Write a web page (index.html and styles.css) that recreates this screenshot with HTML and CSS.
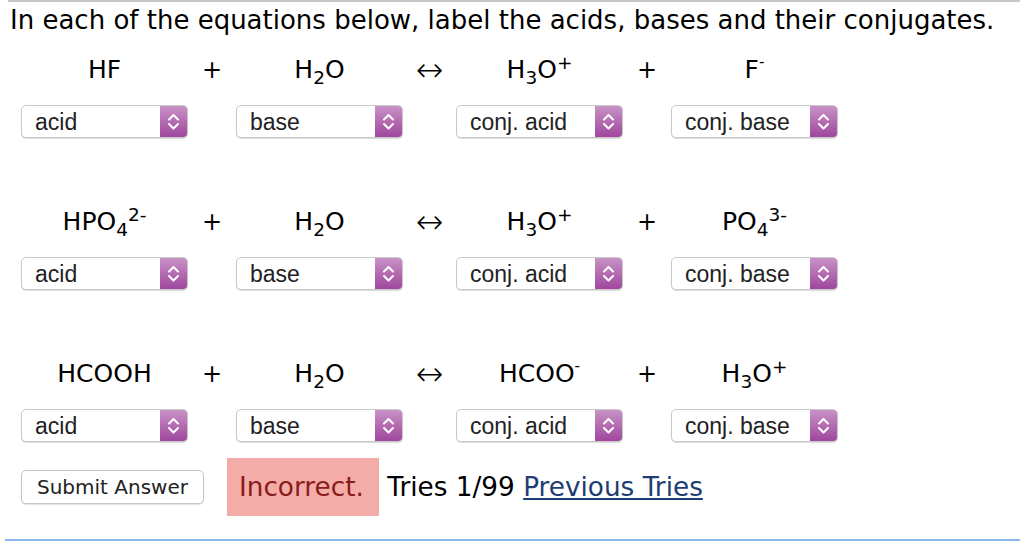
FILE: index.html
```html
<!DOCTYPE html>
<html lang="en">
<head>
  <meta charset="UTF-8">
  <title>Acids, bases and their conjugates</title>
  <link rel="stylesheet" href="styles.css">
</head>
<body>
  <div class="problem">
    <p class="prompt">In each of the equations below, label the acids, bases and their conjugates.</p>

    <div class="equation">
      <span class="species">HF</span>
      <span class="op">+</span>
      <span class="species">H<sub>2</sub>O</span>
      <span class="op arrow">&harr;</span>
      <span class="species">H<sub>3</sub>O<sup>+</sup></span>
      <span class="op">+</span>
      <span class="species">F<sup class="minus">-</sup></span>

      <span class="pick"><select><option>acid</option><option>base</option><option>conj. acid</option><option>conj. base</option></select><span class="pick-arrow"><svg viewBox="0 0 27 31"><path d="M9 13.5L13.5 9L18 13.5M9 18L13.5 22.5L18 18"/></svg></span></span>
      <span></span>
      <span class="pick"><select><option>base</option><option>acid</option><option>conj. acid</option><option>conj. base</option></select><span class="pick-arrow"><svg viewBox="0 0 27 31"><path d="M9 13.5L13.5 9L18 13.5M9 18L13.5 22.5L18 18"/></svg></span></span>
      <span></span>
      <span class="pick"><select><option>conj. acid</option><option>acid</option><option>base</option><option>conj. base</option></select><span class="pick-arrow"><svg viewBox="0 0 27 31"><path d="M9 13.5L13.5 9L18 13.5M9 18L13.5 22.5L18 18"/></svg></span></span>
      <span></span>
      <span class="pick"><select><option>conj. base</option><option>acid</option><option>base</option><option>conj. acid</option></select><span class="pick-arrow"><svg viewBox="0 0 27 31"><path d="M9 13.5L13.5 9L18 13.5M9 18L13.5 22.5L18 18"/></svg></span></span>
    </div>

    <div class="equation">
      <span class="species">HPO<sub>4</sub><sup>2-</sup></span>
      <span class="op">+</span>
      <span class="species">H<sub>2</sub>O</span>
      <span class="op arrow">&harr;</span>
      <span class="species">H<sub>3</sub>O<sup>+</sup></span>
      <span class="op">+</span>
      <span class="species">PO<sub>4</sub><sup>3-</sup></span>

      <span class="pick"><select><option>acid</option><option>base</option><option>conj. acid</option><option>conj. base</option></select><span class="pick-arrow"><svg viewBox="0 0 27 31"><path d="M9 13.5L13.5 9L18 13.5M9 18L13.5 22.5L18 18"/></svg></span></span>
      <span></span>
      <span class="pick"><select><option>base</option><option>acid</option><option>conj. acid</option><option>conj. base</option></select><span class="pick-arrow"><svg viewBox="0 0 27 31"><path d="M9 13.5L13.5 9L18 13.5M9 18L13.5 22.5L18 18"/></svg></span></span>
      <span></span>
      <span class="pick"><select><option>conj. acid</option><option>acid</option><option>base</option><option>conj. base</option></select><span class="pick-arrow"><svg viewBox="0 0 27 31"><path d="M9 13.5L13.5 9L18 13.5M9 18L13.5 22.5L18 18"/></svg></span></span>
      <span></span>
      <span class="pick"><select><option>conj. base</option><option>acid</option><option>base</option><option>conj. acid</option></select><span class="pick-arrow"><svg viewBox="0 0 27 31"><path d="M9 13.5L13.5 9L18 13.5M9 18L13.5 22.5L18 18"/></svg></span></span>
    </div>

    <div class="equation">
      <span class="species">HCOOH</span>
      <span class="op">+</span>
      <span class="species">H<sub>2</sub>O</span>
      <span class="op arrow">&harr;</span>
      <span class="species">HCOO<sup class="minus">-</sup></span>
      <span class="op">+</span>
      <span class="species">H<sub>3</sub>O<sup>+</sup></span>

      <span class="pick"><select><option>acid</option><option>base</option><option>conj. acid</option><option>conj. base</option></select><span class="pick-arrow"><svg viewBox="0 0 27 31"><path d="M9 13.5L13.5 9L18 13.5M9 18L13.5 22.5L18 18"/></svg></span></span>
      <span></span>
      <span class="pick"><select><option>base</option><option>acid</option><option>conj. acid</option><option>conj. base</option></select><span class="pick-arrow"><svg viewBox="0 0 27 31"><path d="M9 13.5L13.5 9L18 13.5M9 18L13.5 22.5L18 18"/></svg></span></span>
      <span></span>
      <span class="pick"><select><option>conj. acid</option><option>acid</option><option>base</option><option>conj. base</option></select><span class="pick-arrow"><svg viewBox="0 0 27 31"><path d="M9 13.5L13.5 9L18 13.5M9 18L13.5 22.5L18 18"/></svg></span></span>
      <span></span>
      <span class="pick"><select><option>conj. base</option><option>acid</option><option>base</option><option>conj. acid</option></select><span class="pick-arrow"><svg viewBox="0 0 27 31"><path d="M9 13.5L13.5 9L18 13.5M9 18L13.5 22.5L18 18"/></svg></span></span>
    </div>

    <div class="feedback">
      <button class="submit">Submit Answer</button>
      <span class="status"><span class="verdict">Incorrect.</span> Tries 1/99 <a href="#">Previous Tries</a></span>
    </div>
  </div>
  <div class="rule-bottom"></div>
</body>
</html>
```

FILE: styles.css
```css
body { margin:0; background:#fff; color:#000;
       font-family:"DejaVu Sans", Verdana, sans-serif; }

.problem { margin-left:8px; border-top:2px solid #c8c8c8; }

.prompt { margin:0; padding:4px 0 0 2px; font-size:26px; line-height:28px; }

.equation { display:grid; margin:14px 0 0 13px;
            grid-template-columns:167px 48px 167px 53px 167px 48px 167px;
            grid-template-rows:44px 33px; row-gap:13px; align-items:center; }
.equation + .equation { margin-top:62px; }

.species, .op { text-align:center; font-size:25px; line-height:30px; }
.op { font-size:24px; }
.op.arrow { font-size:33px; font-weight:200; }
sub, sup { font-size:0.74em; line-height:0; }
sup.minus { font-size:0.6em; vertical-align:0.75em; }

.pick { display:flex; height:33px; box-sizing:border-box;
        border:1px solid #c9c9c9; border-radius:5px; overflow:hidden;
        background:#fff; box-shadow:0 1px 1px rgba(0,0,0,0.15); }
.pick select { flex:1; min-width:0; appearance:none; -webkit-appearance:none;
               border:none; background:transparent; margin:0; padding:0 0 0 13px;
               font-family:"Liberation Sans", Arial, sans-serif; font-size:23px;
               color:#222; outline:none; }
.pick-arrow { width:27px; flex:none; background:linear-gradient(#c893c6, #a0459d); }
.pick-arrow svg { display:block; width:27px; height:31px; fill:none;
                  stroke:#fff; stroke-width:2; stroke-linecap:round; stroke-linejoin:round; }

.feedback { display:flex; align-items:center; margin:16px 0 0 13px; }
.submit { height:34px; padding:0 15px; background:#fff; color:#222;
          border:1px solid #c6c6c6; border-radius:5px;
          box-shadow:0 1px 1px rgba(0,0,0,0.12);
          font-family:"DejaVu Sans", Verdana, sans-serif; font-size:20px; }
.status { margin-left:23px; font-size:26.3px; white-space:nowrap; }
.verdict { display:inline-block; line-height:58px; padding:0 15px 0 12px;
           background:#f4aca9; color:#8a1b1b; }
.status a { color:#1d3d73; }

.rule-bottom { margin:23px 0 0 5px; border-top:2px solid #8ab9ef; }
```
